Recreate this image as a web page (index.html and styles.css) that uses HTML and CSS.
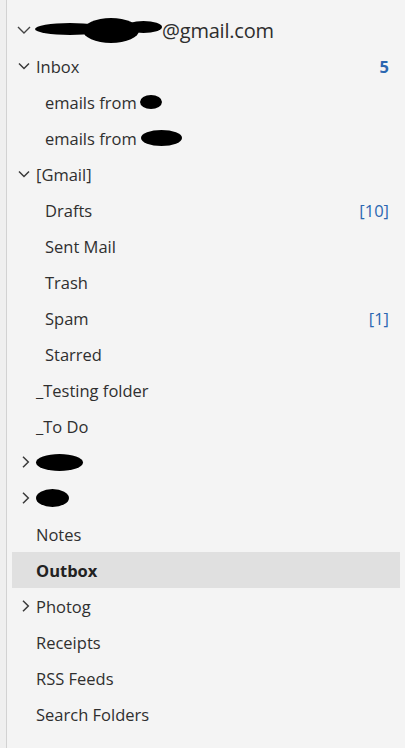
FILE: index.html
```html
<!DOCTYPE html>
<html>
<head>
    <title>Folders</title>
    <link rel="stylesheet" href="styles.css">
</head>
<body>
    <div class="pane">
        <div class="account">
            <svg class="chev-big" width="14" height="14" viewBox="0 0 14 14"><path d="M1 4 L7 10 L13 4" fill="none" stroke="#444" stroke-width="1.4"/></svg>
            <span class="blob blob-acct"><i class="b1"></i><i class="b2"></i><i class="b3"></i></span><span class="acct-name">@gmail.com</span>
        </div>

        <ul class="tree">
            <li class="row">
                <svg class="chev" width="12" height="12" viewBox="0 0 12 12"><path d="M1 3.5 L6 8.5 L11 3.5" fill="none" stroke="#3a3a3a" stroke-width="1.5"/></svg>
                <span class="name">Inbox</span><span class="count strong">5</span>
            </li>
            <li class="row sub"><span class="name">emails from</span><span class="blob blob-s1"></span></li>
            <li class="row sub"><span class="name">emails from</span><span class="blob blob-s2"></span></li>
            <li class="row">
                <svg class="chev" width="12" height="12" viewBox="0 0 12 12"><path d="M1 3.5 L6 8.5 L11 3.5" fill="none" stroke="#3a3a3a" stroke-width="1.5"/></svg>
                <span class="name">[Gmail]</span>
            </li>
            <li class="row sub"><span class="name">Drafts</span><span class="count">[10]</span></li>
            <li class="row sub"><span class="name">Sent Mail</span></li>
            <li class="row sub"><span class="name">Trash</span></li>
            <li class="row sub"><span class="name">Spam</span><span class="count">[1]</span></li>
            <li class="row sub"><span class="name">Starred</span></li>
            <li class="row top"><span class="name">_Testing folder</span></li>
            <li class="row top"><span class="name">_To Do</span></li>
            <li class="row">
                <svg class="chev" width="12" height="12" viewBox="0 0 12 12"><path d="M5 0.8 L10.3 6 L5 11.2" fill="none" stroke="#3a3a3a" stroke-width="1.5"/></svg>
                <span class="blob blob-f1"></span>
            </li>
            <li class="row">
                <svg class="chev" width="12" height="12" viewBox="0 0 12 12"><path d="M5 0.8 L10.3 6 L5 11.2" fill="none" stroke="#3a3a3a" stroke-width="1.5"/></svg>
                <span class="blob blob-f2"></span>
            </li>
            <li class="row top"><span class="name">Notes</span></li>
            <li class="row top selected"><span class="name">Outbox</span></li>
            <li class="row">
                <svg class="chev" width="12" height="12" viewBox="0 0 12 12"><path d="M5 0.8 L10.3 6 L5 11.2" fill="none" stroke="#3a3a3a" stroke-width="1.5"/></svg>
                <span class="name">Photog</span>
            </li>
            <li class="row top"><span class="name">Receipts</span></li>
            <li class="row top"><span class="name">RSS Feeds</span></li>
            <li class="row top"><span class="name">Search Folders</span></li>
        </ul>
    </div>
</body>
</html>
```

FILE: styles.css
```css
html, body {
    margin: 0;
    height: 100%;
}

body {
    font-family: "Open Sans", "Noto Sans", sans-serif;
    background-color: #efefef;
    color: #2f2f2f;
    padding-left: 6px;
    box-sizing: border-box;
}

.pane {
    background-color: #f4f4f4;
    border-left: 1px solid #d2d2d2;
    height: 100%;
    box-sizing: border-box;
    padding: 12px 5px 0 5px;
}

.account {
    height: 36px;
    display: flex;
    align-items: center;
    font-size: 20px;
    color: #2e2e2e;
}

.chev-big {
    margin-left: 5px;
    margin-right: 4px;
}

.acct-name {
    letter-spacing: -0.2px;
}

.tree {
    list-style: none;
    margin: 0;
    padding: 0;
}

.row {
    height: 36px;
    display: flex;
    align-items: center;
    font-size: 16.5px;
    padding-left: 6px;
    padding-right: 11px;
}

.row .chev {
    width: 12px;
    margin-right: 6px;
    flex: none;
}

.row.top {
    padding-left: 24px;
}

.row.sub {
    padding-left: 33px;
}

.row.selected {
    background-color: #e0e0e0;
    font-weight: bold;
    color: #222;
}

.count {
    margin-left: auto;
    color: #2b67b1;
}

.count.strong {
    font-weight: bold;
}

/* redacted bits */
.blob {
    display: inline-block;
    background: #000;
    border-radius: 50%;
}

.blob-acct {
    position: relative;
    width: 127px;
    height: 26px;
    background: none;
}

.blob-acct i {
    position: absolute;
    background: #000;
    border-radius: 50%;
}

.blob-acct .b1 { left: 0; top: 6px; width: 70px; height: 12px; }
.blob-acct .b2 { left: 48px; top: 1px; width: 56px; height: 25px; }
.blob-acct .b3 { left: 90px; top: 4px; width: 37px; height: 12px; }

.blob-s1 {
    width: 22px;
    height: 14px;
    margin-left: 3px;
}

.blob-s2 {
    width: 41px;
    height: 16px;
    margin-left: 4px;
}

.blob-f1 {
    width: 47px;
    height: 17px;
}

.blob-f2 {
    width: 33px;
    height: 18px;
}
```
